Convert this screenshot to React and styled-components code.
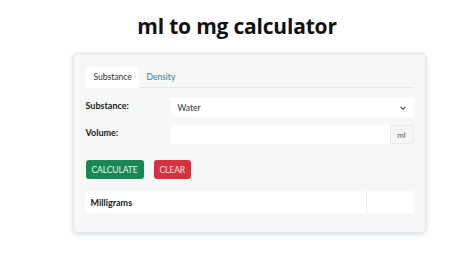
import * as React from "react"
import styled, { createGlobalStyle } from "styled-components"

const GlobalStyle = createGlobalStyle`
  html, body {
    margin: 0;
    padding: 0;
    background: #ffffff;
  }
  body {
    font-family: "Lato", "Noto Sans", sans-serif;
    color: #212529;
  }
`

const Page = styled.main`
  width: 474px;
  height: 263px;
  display: flex;
  flex-direction: column;
  align-items: center;
  overflow: hidden;
`

const Title = styled.h1`
  margin: 10px 0 0;
  font-family: "Open Sans", sans-serif;
  font-weight: 700;
  font-size: 21px;
  line-height: 32px;
  color: #111;
  letter-spacing: -0.2px;
`

const Card = styled.section`
  margin-top: 11px;
  margin-left: 24px;
  width: 353px;
  box-sizing: border-box;
  padding: 13px 11px 19px 12px;
  background: #f6f7f7;
  border: 1px solid #e3e7ea;
  border-radius: 5px;
  box-shadow: 0 1px 5px rgba(140, 170, 190, 0.45);
`

const Tabs = styled.nav`
  display: flex;
  border-bottom: 1px solid #e4e6e8;
  font-size: 8.5px;
`

const Tab = styled.span`
  padding: 5px 8px 6px;
  background: ${p => (p.$active ? "#fff" : "transparent")};
  color: ${p => (p.$active ? "#333" : "#3a78a8")};
  border-radius: 3px 3px 0 0;
  margin-bottom: -1px;
  width: ${p => (p.$active ? "37px" : "auto")};
  text-align: center;
`

const Form = styled.div`
  display: grid;
  grid-template-columns: 85px 1fr;
  row-gap: 8px;
  margin-top: 10px;
  align-items: center;
`

const Label = styled.label`
  font-size: 9px;
  font-weight: 700;
  color: #222;
  align-self: start;
  padding-top: 2px;
`

const Select = styled.div`
  height: 19px;
  background: #fff;
  border-radius: 3px;
  display: flex;
  align-items: center;
  justify-content: space-between;
  padding: 0 7px;
  font-size: 8.5px;
  color: #333;
`

const InputGroup = styled.div`
  display: flex;
  height: 19px;
`

const Input = styled.div`
  flex: 1;
  background: #fff;
  border-radius: 3px 0 0 3px;
`

const Addon = styled.span`
  width: 22px;
  display: flex;
  align-items: center;
  justify-content: center;
  background: #f4f5f6;
  border: 1px solid #e6e8ea;
  border-radius: 0 3px 3px 0;
  font-size: 8px;
  color: #555;
`

const Buttons = styled.div`
  display: flex;
  gap: 10px;
  margin-top: 16px;
`

const Button = styled.button`
  height: 19px;
  padding: 0 6px;
  border: none;
  border-radius: 3px;
  background: ${p => p.$bg};
  color: ${p => p.$color};
  font-family: "Lato", sans-serif;
  font-size: 8.5px;
  letter-spacing: -0.1px;
`

const Result = styled.div`
  display: flex;
  margin-top: 12px;
  height: 22px;
  background: #fff;
`

const ResultLabel = styled.span`
  flex: 1;
  display: flex;
  align-items: center;
  padding-left: 5px;
  font-size: 9px;
  font-weight: 700;
  color: #222;
  border-right: 1px solid #eceeef;
`

const ResultValue = styled.span`
  width: 47px;
`

const Chevron = () => (
  <svg width="8" height="6" viewBox="0 0 8 6" fill="none">
    <path d="M1.5 1.8 L4 4.3 L6.5 1.8" stroke="#444" strokeWidth="1.1" />
  </svg>
)

const App = () => (
  <>
    <GlobalStyle />
    <Page>
      <Title>ml to mg calculator</Title>
      <Card>
        <Tabs>
          <Tab $active>Substance</Tab>
          <Tab>Density</Tab>
        </Tabs>
        <Form>
          <Label>Substance:</Label>
          <Select>
            <span>Water</span>
            <Chevron />
          </Select>
          <Label>Volume:</Label>
          <InputGroup>
            <Input />
            <Addon>ml</Addon>
          </InputGroup>
        </Form>
        <Buttons>
          <Button $bg="#198754" $color="#e9f5ee">CALCULATE</Button>
          <Button $bg="#d7313f" $color="#fbe3e5">CLEAR</Button>
        </Buttons>
        <Result>
          <ResultLabel>Milligrams</ResultLabel>
          <ResultValue />
        </Result>
      </Card>
    </Page>
  </>
)

export default App
